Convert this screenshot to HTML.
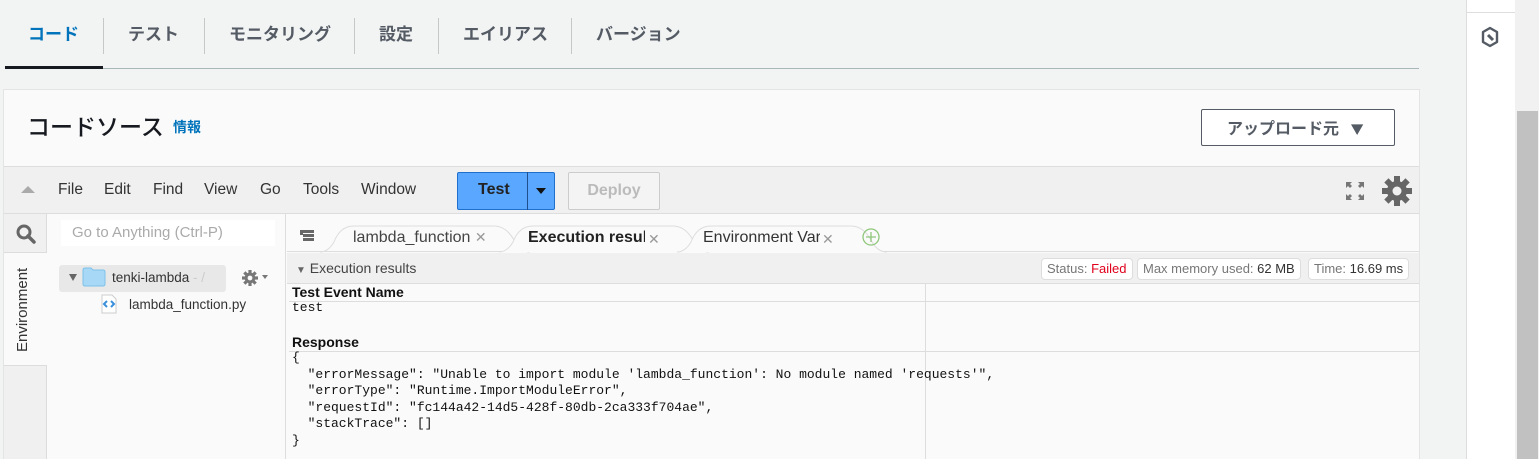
<!DOCTYPE html>
<html style="width:1539px;height:459px;overflow:hidden"><head><meta charset="utf-8"><style>
*{margin:0;padding:0;box-sizing:border-box}
body{width:1539px;height:459px;overflow:hidden;background:#f2f3f3;position:relative;font-family:"Liberation Sans","Noto Sans CJK JP",sans-serif}
.a{position:absolute}
.jp{font-family:"Noto Sans CJK JP","Liberation Sans",sans-serif}
.tab{position:absolute;top:20px;font-size:17px;font-weight:bold;color:#545b64;line-height:26px}
.sep{position:absolute;top:18px;width:1px;height:36px;background:#c6c8c8}
.menu{position:absolute;top:181px;font-size:15.5px;color:#333;}
.mono{font-family:"Liberation Mono","DejaVu Sans Mono",monospace;font-size:13px;color:#111;}
.badge{position:absolute;top:258px;height:22px;border:1px solid #ddd;border-radius:4px;background:#fff;font-size:13px;color:#777;line-height:20px;padding:0 5px}
</style></head><body>
<div class="tab jp" style="left:28px;color:#0073bb">コード</div>
<div class="sep" style="left:103px"></div>
<div class="tab jp" style="left:128px">テスト</div>
<div class="sep" style="left:204px"></div>
<div class="tab jp" style="left:229px">モニタリング</div>
<div class="sep" style="left:354px"></div>
<div class="tab jp" style="left:379px">設定</div>
<div class="sep" style="left:438px"></div>
<div class="tab jp" style="left:463px">エイリアス</div>
<div class="sep" style="left:571px"></div>
<div class="tab jp" style="left:596px">バージョン</div>
<div class="a" style="left:5px;top:68px;width:1414px;height:1px;background:#aab7b8"></div>
<div class="a" style="left:5px;top:66px;width:98px;height:3px;background:#16191f"></div>

<div class="a" style="left:3px;top:89px;width:1417px;height:370px;background:#fafafa;border:1px solid #e4e4e4;border-bottom:none"></div>
<div class="a jp" style="left:27px;top:109px;font-size:23px;font-weight:500;color:#16191f;line-height:32px">コードソース</div>
<div class="a jp" style="left:173px;top:117px;font-size:14px;font-weight:bold;color:#0073bb;line-height:20px">情報</div>
<div class="a jp" style="left:1201px;top:109px;width:194px;height:37px;border:1px solid #545b64;border-radius:2px;background:#fff;font-size:16px;font-weight:bold;color:#545b64;line-height:35px;padding-left:25px">アップロード元 <span style="font-size:13px;margin-left:8px">▼</span></div>

<div class="a" style="left:4px;top:166px;width:1415px;height:48px;background:#f0f0f0;border-top:1px solid #ddd;border-bottom:1px solid #ddd"></div>
<div class="a" style="left:21px;top:186px;width:0;height:0;border-left:7px solid transparent;border-right:7px solid transparent;border-bottom:7px solid #aaa"></div>
<div class="menu" style="left:58px">File</div>
<div class="menu" style="left:104px">Edit</div>
<div class="menu" style="left:153px">Find</div>
<div class="menu" style="left:204px">View</div>
<div class="menu" style="left:260px">Go</div>
<div class="menu" style="left:303px">Tools</div>
<div class="menu" style="left:361px">Window</div>
<div class="a" style="left:457px;top:172px;width:98px;height:38px;background:#59a7ff;border:1px solid #1f6fcc;border-radius:2px"></div>
<div class="a" style="left:527px;top:172px;width:1px;height:38px;background:#1f4f8c"></div>
<div class="a" style="left:478px;top:181px;font-size:16px;font-weight:bold;color:#222">Test</div>
<div class="a" style="left:536px;top:188px;width:0;height:0;border-left:5px solid transparent;border-right:5px solid transparent;border-top:6px solid #111"></div>
<div class="a" style="left:568px;top:172px;width:92px;height:38px;border:1px solid #ccc;border-radius:2px;background:#f4f4f4;font-size:16px;font-weight:bold;color:#bbb;text-align:center;line-height:36px">Deploy</div>
<svg class="a" style="left:1345px;top:181px" width="20" height="20" viewBox="0 0 20 20" fill="#777"><path d="M1 1h6l-2 2 2 2-2 2-2-2-2 2zM19 1h-6l2 2-2 2 2 2 2-2 2 2zM1 19h6l-2-2 2-2-2-2-2 2-2-2zM19 19h-6l2-2-2-2 2-2 2 2 2-2z"/></svg>
<svg class="a" style="left:1382px;top:176px" width="30" height="30" viewBox="0 0 30 30"><g fill="#666" transform="translate(15 15)"><circle r="10"/><rect x="-3" y="-15" width="6" height="30"/><rect x="-3" y="-15" width="6" height="30" transform="rotate(45)"/><rect x="-3" y="-15" width="6" height="30" transform="rotate(90)"/><rect x="-3" y="-15" width="6" height="30" transform="rotate(135)"/></g><circle cx="15" cy="15" r="4.5" fill="#f0f0f0"/></svg>

<div class="a" style="left:4px;top:214px;width:43px;height:245px;background:#f0f0f0;border-right:1px solid #ddd"></div>
<div class="a" style="left:4px;top:252px;width:43px;height:114px;background:#fafafa;border-top:1px solid #ddd;border-bottom:1px solid #ddd"></div>
<svg class="a" style="left:15px;top:223px" width="22" height="22" viewBox="0 0 22 22"><circle cx="9" cy="9" r="6" fill="none" stroke="#666" stroke-width="3"/><path d="M13 13l6 6" stroke="#666" stroke-width="3.5" stroke-linecap="round"/></svg>
<div class="a" style="left:14px;top:352px;transform:rotate(-90deg);transform-origin:0 0;font-size:15px;color:#333;white-space:nowrap">Environment</div>

<div class="a" style="left:48px;top:214px;width:238px;height:245px;background:#fafafa;border-right:1px solid #ddd"></div>
<div class="a" style="left:61px;top:220px;width:214px;height:26px;background:#fff;font-size:15px;color:#aaa;padding:4px 0 0 11px">Go to Anything (Ctrl-P)</div>
<div class="a" style="left:59px;top:265px;width:167px;height:27px;background:#e8e8e8;border-radius:3px"></div>
<div class="a" style="left:69px;top:274px;width:0;height:0;border-left:4px solid transparent;border-right:4px solid transparent;border-top:7px solid #666"></div>
<svg class="a" style="left:82px;top:266px" width="24" height="22" viewBox="0 0 24 22"><path d="M1 4q0-2 2-2h6l2 2h10q2 0 2 2v12q0 2-2 2H3q-2 0-2-2z" fill="#a7d8f5" stroke="#7ec2ea"/></svg>
<div class="a" style="left:112px;top:270px;font-size:13.5px;color:#333">tenki-lambda <span style="color:#ccc">- /</span></div>
<svg class="a" style="left:242px;top:270px" width="16" height="16" viewBox="0 0 30 30"><g fill="#777" transform="translate(15 15)"><circle r="10"/><rect x="-3" y="-15" width="6" height="30"/><rect x="-3" y="-15" width="6" height="30" transform="rotate(45)"/><rect x="-3" y="-15" width="6" height="30" transform="rotate(90)"/><rect x="-3" y="-15" width="6" height="30" transform="rotate(135)"/></g><circle cx="15" cy="15" r="4.5" fill="#fafafa"/></svg>
<div class="a" style="left:262px;top:275px;width:0;height:0;border-left:3px solid transparent;border-right:3px solid transparent;border-top:4px solid #777"></div>
<svg class="a" style="left:101px;top:294px" width="16" height="20" viewBox="0 0 16 20"><path d="M1 1h10l4 4v14H1z" fill="#fff" stroke="#ccc"/><path d="M6 7l-3 3 3 3M10 7l3 3-3 3" stroke="#3a8fdc" stroke-width="2" fill="none"/></svg>
<div class="a" style="left:129px;top:297px;font-size:13.5px;color:#333">lambda_function.py</div>

<div class="a" style="left:287px;top:214px;width:1132px;height:38px;background:#fafafa;border-bottom:1px solid #ddd"></div>
<svg class="a" style="left:287px;top:214px" width="620" height="39" viewBox="0 0 620 39">
<g fill="#666"><rect x="13" y="16" width="14" height="3"/><rect x="16" y="20" width="11" height="3"/><rect x="16" y="24" width="11" height="3"/><rect x="13" y="16" width="3" height="5"/></g>
<path d="M33 38q8-0 14-10q6-16 20-16h140q12 0 20 14q6 12 16 12" fill="none" stroke="#ddd"/>
<path d="M212 38q8 0 14-10q6-16 20-16h140q12 0 20 14q6 12 16 12" fill="#fafafa" stroke="#ddd"/>
<path d="M390 38q8 0 14-10q6-16 20-16h140q12 0 20 14q6 12 16 12" fill="#fafafa" stroke="#ddd"/>
<circle cx="584" cy="23" r="8" fill="none" stroke="#8fc77a" stroke-width="1.3"/><path d="M584 18v10M579 23h10" stroke="#8fc77a" stroke-width="1.3"/>
</svg>
<div class="a" style="left:353px;top:229px;font-size:16px;color:#444">lambda_function <span style="color:#999;font-size:14px">✕</span></div>
<div class="a" style="left:528px;top:229px;font-size:16px;font-weight:bold;color:#222;width:117px;overflow:hidden;white-space:nowrap">Execution results</div>
<div class="a" style="left:648px;top:231px;color:#999;font-size:14px">✕</div>
<div class="a" style="left:703px;top:229px;font-size:16px;color:#333;width:117px;overflow:hidden;white-space:nowrap">Environment Variables</div>
<div class="a" style="left:822px;top:231px;color:#999;font-size:14px">✕</div>

<div class="a" style="left:287px;top:253px;width:1132px;height:31px;background:#f0f0f0;border-bottom:1px solid #ddd"></div>
<div class="a" style="left:296px;top:260px;font-size:14px;color:#444"><span style="font-size:10px;color:#666">▼</span> Execution results</div>
<div class="badge" style="left:1041px">Status: <span style="color:#e0001b">Failed</span></div>
<div class="badge" style="left:1137px">Max memory used: <span style="color:#333">62 MB</span></div>
<div class="badge" style="left:1308px">Time: <span style="color:#333">16.69 ms</span></div>
<div class="a" style="left:287px;top:285px;width:1132px;height:174px;background:#fafafa"></div>
<div class="a" style="left:925px;top:284px;width:1px;height:175px;background:#ddd"></div>
<div class="a" style="left:289px;top:301px;width:1130px;height:1px;background:#ddd"></div>
<div class="a" style="left:289px;top:351px;width:1130px;height:1px;background:#ddd"></div>
<div class="a" style="left:292px;top:284px;font-size:14px;font-weight:bold;color:#111">Test Event Name</div>
<div class="a mono" style="left:292px;top:300px">test</div>
<div class="a" style="left:292px;top:334px;font-size:14px;font-weight:bold;color:#111">Response</div>
<pre class="a mono" style="left:292px;top:350px;line-height:16.6px">{
  "errorMessage": "Unable to import module 'lambda_function': No module named 'requests'",
  "errorType": "Runtime.ImportModuleError",
  "requestId": "fc144a42-14d5-428f-80db-2ca333f704ae",
  "stackTrace": []
}</pre>

<div class="a" style="left:1466px;top:0;width:49px;height:459px;background:#fff;border-left:1px solid #ddd"></div>
<div class="a" style="left:1466px;top:12px;width:49px;height:1px;background:#ddd"></div>
<svg class="a" style="left:1480px;top:26px" width="20" height="22" viewBox="0 0 20 22"><path d="M10 2l7 4v10l-7 4-7-4V6z" fill="none" stroke="#545b64" stroke-width="2.4" stroke-linejoin="round"/><path d="M8 9l5 5" stroke="#545b64" stroke-width="3"/></svg>
<div class="a" style="left:1515px;top:0;width:24px;height:459px;background:#f1f1f1"></div>
<div class="a" style="left:1517px;top:111px;width:21px;height:348px;background:#c1c1c1"></div>
</body></html>
